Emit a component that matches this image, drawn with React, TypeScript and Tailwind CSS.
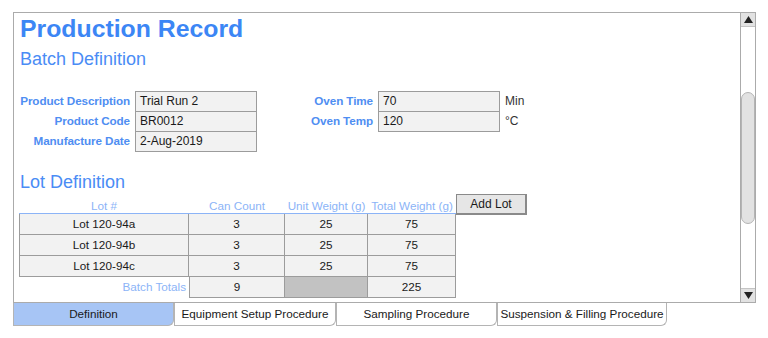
import React from 'react'

const lots = [
  { lot: 'Lot 120-94a', count: 3, unit: 25, total: 75 },
  { lot: 'Lot 120-94b', count: 3, unit: 25, total: 75 },
  { lot: 'Lot 120-94c', count: 3, unit: 25, total: 75 },
]

const tabs = [
  { label: 'Definition', width: 'w-[161px]', active: true },
  { label: 'Equipment Setup Procedure', width: 'w-[162px]', active: false },
  { label: 'Sampling Procedure', width: 'w-[161px]', active: false },
  { label: 'Suspension & Filling Procedure', width: 'w-[170px]', active: false },
]

function Field({ value, first }: { value: string; first?: boolean }) {
  return (
    <div
      className={`h-[21px] w-[122px] border border-[#9c9c9c] bg-[#f2f2f2] pl-[4px] text-[12px] leading-[19px] text-[#1a1a1a] ${first ? '' : '-mt-px'}`}
    >
      {value}
    </div>
  )
}

function Label({ text }: { text: string }) {
  return (
    <div className="flex h-[20px] justify-end whitespace-nowrap text-[11.7px] font-bold leading-[20px] tracking-[-0.1px] text-[#4f8ef2]">
      {text}
    </div>
  )
}

export default function App() {
  return (
    <div className="min-h-[338px] bg-white pl-[13px] pt-[12px] font-['Liberation_Sans',Arial,sans-serif]">
      <div className="flex h-[291px] w-[743px] border border-[#ababab]">
        {/* content */}
        <div className="flex-1 overflow-hidden pl-[6px] pt-[2px]">
          <h1 className="text-[24.8px] font-bold leading-[28px] text-[#3c86f5]">Production Record</h1>
          <h2 className="mt-[5px] text-[18px] leading-[22px] text-[#4a8cf5]">Batch Definition</h2>

          <div className="mt-[21px] flex">
            <div className="w-[110px]">
              <Label text="Product Description" />
              <Label text="Product Code" />
              <Label text="Manufacture Date" />
            </div>
            <div className="ml-[5px]">
              <Field value="Trial Run 2" first />
              <Field value="BR0012" />
              <Field value="2-Aug-2019" />
            </div>
            <div className="w-[116px]">
              <Label text="Oven Time" />
              <Label text="Oven Temp" />
            </div>
            <div className="ml-[5px]">
              <Field value="70" first />
              <Field value="120" />
            </div>
            <div className="ml-[5px] text-[12px] leading-[20px] text-[#333]">
              <div>Min</div>
              <div>°C</div>
            </div>
          </div>

          <h2 className="mt-[19px] text-[18px] leading-[22px] text-[#4a8cf5]">Lot Definition</h2>

          <div className="-ml-px flex items-start">
            <div className="w-[437px] text-[11.7px] text-[#1a1a1a]">
              <div className="grid h-[21px] grid-cols-[170px_96px_83px_88px] border-b border-[#8cb4f7] text-center leading-[14px] text-[#8cb4f7]">
                <div className="pt-[6px]">Lot #</div>
                <div className="pt-[6px]">Can Count</div>
                <div className="whitespace-nowrap pt-[6px]">Unit Weight (g)</div>
                <div className="whitespace-nowrap pt-[6px]">Total Weight (g)</div>
              </div>
              {lots.map((l) => (
                <div key={l.lot} className="grid h-[21px] grid-cols-[170px_96px_83px_88px] text-center leading-[20px]">
                  <div className="border-b border-l border-r border-[#9c9c9c] bg-[#f2f2f2]">{l.lot}</div>
                  <div className="border-b border-r border-[#9c9c9c] bg-[#f2f2f2]">{l.count}</div>
                  <div className="border-b border-r border-[#9c9c9c] bg-[#f2f2f2]">{l.unit}</div>
                  <div className="border-b border-r border-[#9c9c9c] bg-[#f2f2f2]">{l.total}</div>
                </div>
              ))}
              <div className="grid h-[21px] grid-cols-[170px_96px_83px_88px] text-center leading-[20px]">
                <div className="pr-[3px] text-right text-[#8cb4f7]">Batch Totals</div>
                <div className="border-b border-l border-r border-[#9c9c9c] bg-[#f2f2f2]">9</div>
                <div className="border-b border-r border-[#9c9c9c] bg-[#c2c2c2]"></div>
                <div className="border-b border-r border-[#9c9c9c] bg-[#f2f2f2]">225</div>
              </div>
            </div>
            <button className="mt-[1px] h-[21px] w-[71px] border border-b-2 border-r-2 border-[#8a8a8a] bg-[#e6e6e6] text-[12px] leading-[17px] text-[#1a1a1a]">
              Add Lot
            </button>
          </div>
        </div>

        {/* scrollbar */}
        <div className="flex w-[15px] flex-col border-l border-[#ababab] bg-white">
          <div className="flex h-[14px] items-center justify-center border-b border-[#c4c4c4] bg-[#e2e2e2]">
            <svg width="9" height="7" viewBox="0 0 9 7">
              <path d="M4.5 0L9 7H0z" fill="#222" />
            </svg>
          </div>
          <div className="flex-1 pt-[65px]">
            <div className="h-[132px] rounded-full border border-[#b4b4b4] bg-[#e2e2e2]"></div>
          </div>
          <div className="flex h-[14px] items-center justify-center border-t border-[#c4c4c4] bg-[#e2e2e2]">
            <svg width="9" height="7" viewBox="0 0 9 7">
              <path d="M0 0H9L4.5 7z" fill="#222" />
            </svg>
          </div>
        </div>
      </div>

      {/* tabs */}
      <div className="flex">
        {tabs.map((t) => (
          <div
            key={t.label}
            className={`h-[23px] ${t.width} whitespace-nowrap rounded-br-[6px] border-b border-l border-r border-[#b4b4b4] text-center text-[11.7px] leading-[22px] text-[#1a1a1a] ${t.active ? 'bg-[#a7c5f5]' : 'bg-white'}`}
          >
            {t.label}
          </div>
        ))}
      </div>
    </div>
  )
}
